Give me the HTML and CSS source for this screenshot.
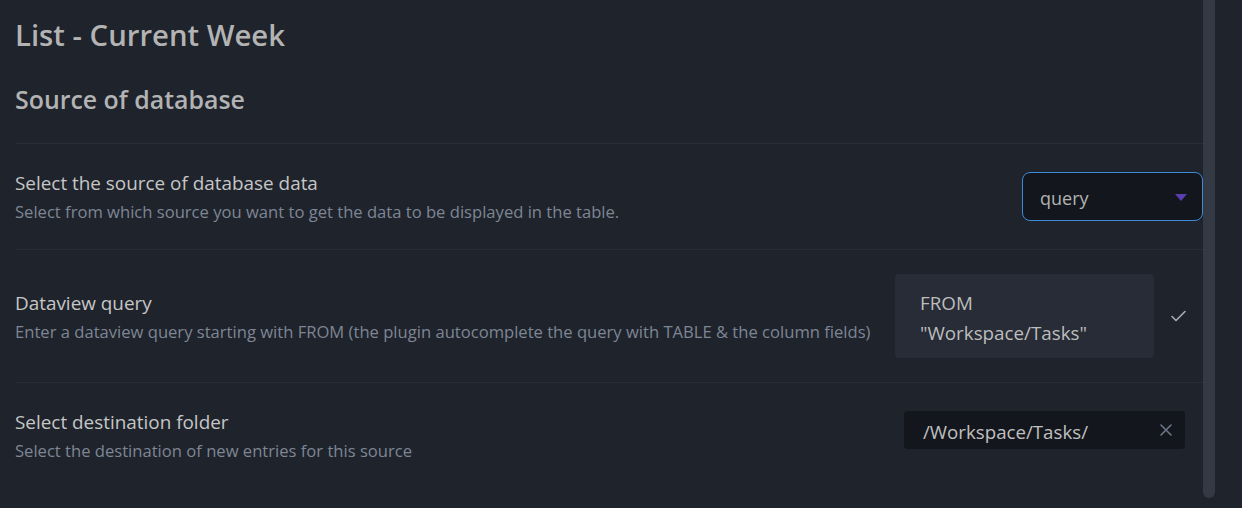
FILE: index.html
```html
<!DOCTYPE html>
<html lang="en">
<head>
  <meta charset="UTF-8" />
  <meta name="viewport" content="width=device-width, initial-scale=1.0"/>
  <title>List - Current Week</title>
  <link rel="stylesheet" href="styles.css">
</head>
<body>
  <div class="pane">
    <div class="content">
      <h1 class="title">List - Current Week</h1>
      <h2 class="section">Source of database</h2>

      <div class="setting">
        <div class="info">
          <div class="name">Select the source of database data</div>
          <div class="desc">Select from which source you want to get the data to be displayed in the table.</div>
        </div>
        <div class="control">
          <div class="dropdown">
            <span class="value">query</span>
            <span class="caret"></span>
          </div>
        </div>
      </div>

      <div class="setting">
        <div class="info">
          <div class="name">Dataview query</div>
          <div class="desc">Enter a dataview query starting with FROM (the plugin autocomplete the query with TABLE &amp; the column fields)</div>
        </div>
        <div class="control">
          <div class="query-box">FROM<br>"Workspace/Tasks"</div>
          <svg class="check" width="15" height="12" viewBox="0 0 15 12">
            <path d="M1 6.5 L5 10.5 L14 1.5" fill="none" stroke="#a9adb4" stroke-width="1.6" stroke-linecap="round" stroke-linejoin="round"/>
          </svg>
        </div>
      </div>

      <div class="setting">
        <div class="info">
          <div class="name">Select destination folder</div>
          <div class="desc">Select the destination of new entries for this source</div>
        </div>
        <div class="control">
          <div class="folder-input">
            <span class="value">/Workspace/Tasks/</span>
            <svg class="clear" width="12" height="12" viewBox="0 0 12 12">
              <path d="M1 1 L11 11 M11 1 L1 11" fill="none" stroke="#6b7586" stroke-width="1.6" stroke-linecap="round"/>
            </svg>
          </div>
        </div>
      </div>
    </div>
    <div class="scroll-track"><div class="scroll-thumb"></div></div>
  </div>
</body>
</html>
```
FILE: styles.css
```css
body { margin: 0; background: #1e232c; font-family: "Open Sans", "Noto Sans", sans-serif; color: #c4c4c4; overflow: hidden; }
.pane { display: flex; height: 508px; }
.content { flex: 1; padding-left: 15px; }
.scroll-track { width: 39px; }
.scroll-thumb { width: 12px; height: 498px; background: #343a44; border-radius: 0 0 6px 6px; }

.title { margin: 0; padding-top: 15px; font-size: 29.3px; line-height: 40px; font-weight: 600; color: #b3b3b3; }
.section { margin: 28px 0 0; padding-bottom: 28px; font-size: 24.9px; line-height: 32px; font-weight: 600; color: #b3b3b3; }

.setting { display: flex; align-items: center; border-top: 1px solid #282d37; padding: 24px 0; }
.info { flex: 1; }
.name { font-size: 18.9px; line-height: 30px; color: #c6c6c6; }
.desc { font-size: 16.6px; line-height: 27px; color: #7e8694; }
.control { display: flex; align-items: center; }

.dropdown { box-sizing: border-box; width: 181px; height: 49px; border: 1px solid #3d8bd6; border-radius: 8px; background: #13171d; display: flex; align-items: center; justify-content: space-between; padding: 0 15px 0 17px; font-size: 18px; color: #b3b3b3; }
.dropdown .value { padding-top: 3px; }
.caret { width: 0; height: 0; border-left: 6px solid transparent; border-right: 6px solid transparent; border-top: 7px solid #5a3db0; margin-top: 2px; }

.query-box { width: 259px; height: 84px; box-sizing: border-box; padding: 14px 0 0 25px; background: #272c36; border-radius: 4px; font-size: 18.8px; line-height: 30px; color: #bdbdbd; }
.check { margin: 0 17px 0 17px; }

.folder-input { width: 281px; height: 38px; box-sizing: border-box; margin: 0 18px 12px 0; padding: 0 13px 0 19px; background: #13171d; border-radius: 4px; display: flex; align-items: center; justify-content: space-between; font-size: 18.7px; color: #c0c0c0; }
.folder-input .value { padding-top: 3px; }
```
